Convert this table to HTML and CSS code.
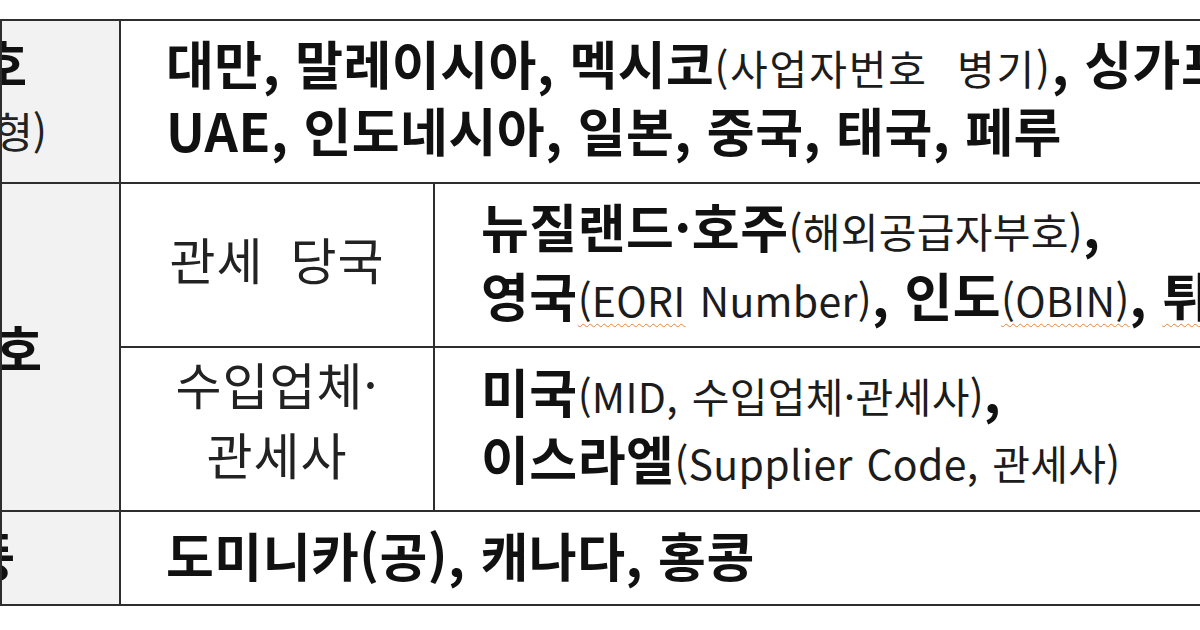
FILE: index.html
```html
<!DOCTYPE html>
<html lang="ko">
<head>
<meta charset="utf-8">
<link rel="stylesheet" href="styles.css">
</head>
<body>
<div class="page">
  <table class="grid">
    <colgroup><col class="c1"><col class="c2"><col class="c3"></colgroup>
    <tr class="r1">
      <th class="head">
        <div class="clip">
          <span class="h-main h-r1">사업자번호</span>
          <span class="h-sub">(사업자번호형)</span>
        </div>
      </th>
      <td colspan="2" class="wide">
        <div class="line">대만, 말레이시아, 멕시코<span class="s wsp">(사업자번호 병기)</span>, 싱가포르, 베트남</div>
        <div class="line">UAE, 인도네시아, 일본, 중국, 태국, 페루</div>
      </td>
    </tr>
    <tr class="r2">
      <th rowspan="2" class="head">
        <div class="clip"><span class="h-main h-r2">공급자부호</span></div>
      </th>
      <td class="lab lab1">관세 당국</td>
      <td class="val">
        <div class="line l69">뉴질랜드·호주<span class="s">(해외공급자부호)</span>,</div>
        <div class="line l69">영국<span class="s"><span class="sp">(EORI</span> Number)</span>, 인도<span class="s"><span class="sp">(OBIN)</span></span>, <span class="sp">튀르키예</span><span class="s">(TIN)</span></div>
      </td>
    </tr>
    <tr class="r3">
      <td class="lab lab2">수입업체·<br>관세사</td>
      <td class="val">
        <div class="line">미국<span class="s">(MID, 수입업체·관세사)</span>,</div>
        <div class="line">이스라엘<span class="s">(Supplier Code, 관세사)</span></div>
      </td>
    </tr>
    <tr class="r4">
      <th class="head">
        <div class="clip"><span class="h-main h-r4">기타 등</span></div>
      </th>
      <td colspan="2" class="wide">
        <div class="line">도미니카(공), 캐나다, 홍콩</div>
      </td>
    </tr>
  </table>
</div>
</body>
</html>
```
FILE: styles.css
```css
html, body {
  margin: 0;
  padding: 0;
  background: #ffffff;
  overflow: hidden;
}
.page {
  width: 1200px;
  height: 630px;
  overflow: hidden;
  padding-top: 19px;
  box-sizing: border-box;
}
.grid {
  border-collapse: collapse;
  table-layout: fixed;
  width: 1400px;
  font-family: "Noto Sans CJK KR", "Noto Sans", sans-serif;
  color: #111;
}
.c1 { width: 119px; }
.c2 { width: 314px; }
.c3 { width: 967px; }
.grid th, .grid td {
  border: 2px solid #2e2e2e;
  padding: 0;
  white-space: nowrap;
  vertical-align: middle;
}
.r1 { height: 163px; }
.r2 { height: 164px; }
.r3 { height: 163px; }
.r4 { height: 94px; }
.r1 > td, .r1 > th { padding-bottom: 11px; }
.r2 > td.val { padding-bottom: 11px; }
.r3 > td.val { padding-bottom: 10px; }
.r4 > td, .r4 > th { padding-bottom: 8px; }
.head {
  background: #f2f2f2;
  font-weight: 700;
}
.clip {
  display: flex;
  flex-direction: column;
  align-items: flex-end;
  overflow: hidden;
}
.h-main {
  font-size: 52px;
  line-height: 67px;
  font-weight: 700;
}
.h-r1 { margin-right: 92px; }
.h-r2 { margin-right: 77px; }
.h-r4 { margin-right: 104px; }
.h-sub {
  font-size: 42px;
  line-height: 67px;
  font-weight: 400;
  color: #222;
  margin-right: 72px;
}
.wide {
  padding-left: 45px !important;
  font-weight: 700;
  font-size: 52px;
  letter-spacing: 0.5px;
}
.val {
  padding-left: 46px !important;
  font-weight: 700;
  font-size: 52px;
  letter-spacing: 0.5px;
}
.line {
  line-height: 67px;
}
.line.l69 { line-height: 69px; }
.s {
  font-size: 41px;
  line-height: 1;
  font-weight: 400;
  color: #1c1c1c;
  letter-spacing: 0.3px;
  word-spacing: 2px;
}
.s.wsp { word-spacing: 16px; letter-spacing: 1.8px; }
.lab {
  text-align: center;
  font-size: 50px;
  font-weight: 400;
  line-height: 70px;
  color: #222;
  letter-spacing: 1px;
}
.lab1 { word-spacing: 12px; padding-bottom: 14px !important; }
.lab2 { padding-bottom: 22px !important; }
.sp {
  text-decoration: underline wavy #e8833a;
  text-decoration-thickness: 1px;
  text-underline-offset: 6px;
}
```
